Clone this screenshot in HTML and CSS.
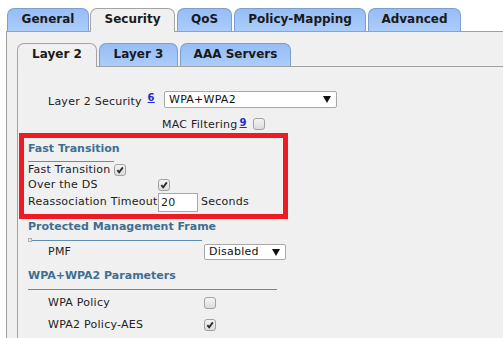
FILE: index.html
```html
<!DOCTYPE html>
<html>
<head>
<meta charset="utf-8">
<link rel="stylesheet" href="styles.css">
</head>
<body>
<div class="page">
  <div class="tabs outer">
    <div class="tab t-general">General</div>
    <div class="tab active t-security">Security</div>
    <div class="tab t-qos">QoS</div>
    <div class="tab t-policy">Policy-Mapping</div>
    <div class="tab t-adv">Advanced</div>
  </div>
  <div class="panel">
    <div class="tabs inner">
      <div class="tab active t-l2">Layer 2</div>
      <div class="tab t-l3">Layer 3</div>
      <div class="tab t-aaa">AAA Servers</div>
    </div>
    <div class="subpanel">
      <div class="row r-l2sec">
        <span class="lbl l2lbl">Layer 2 Security <a class="sup">6</a></span>
        <div class="select sel-l2"><span>WPA+WPA2</span><span class="arrow"></span></div>
      </div>
      <div class="row r-mac">
        <span class="maclbl">MAC Filtering<a class="sup2">9</a></span>
        <span class="cb mac-cb"></span>
      </div>
      <div class="redbox">
        <div class="heading h-ft">Fast Transition</div>
        <div class="hline hl-ft"></div>
        <div class="row r-ft">
          <span>Fast Transition</span>
          <span class="cb checked ft-cb"><svg viewBox="0 0 12 12"><path d="M2.8 6.2 L5 8.8 L9.4 2.8" fill="none" stroke="#2a2a2a" stroke-width="2.2"/></svg></span>
        </div>
        <div class="row r-ds">
          <span class="ds-lbl">Over the DS</span>
          <span class="cb checked"><svg viewBox="0 0 12 12"><path d="M2.8 6.2 L5 8.8 L9.4 2.8" fill="none" stroke="#2a2a2a" stroke-width="2.2"/></svg></span>
        </div>
        <div class="row r-re">
          <span class="re-lbl">Reassociation Timeout</span>
          <span class="input">20</span>
          <span class="secs">Seconds</span>
        </div>
      </div>
      <div class="heading h-pmf">Protected Management Frame</div>
      <div class="hline hl-pmf"><span class="mini"></span></div>
      <div class="row r-pmf">
        <span class="lbl pmf-lbl">PMF</span>
        <div class="select sel-pmf"><span>Disabled</span><span class="arrow"></span></div>
      </div>
      <div class="heading h-wpa">WPA+WPA2 Parameters</div>
      <div class="hline hl-wpa"></div>
      <div class="row r-wpa">
        <span class="lbl pmf-lbl">WPA Policy</span>
        <span class="cb"></span>
      </div>
      <div class="row r-wpa2">
        <span class="lbl pmf-lbl">WPA2 Policy-AES</span>
        <span class="cb checked"><svg viewBox="0 0 12 12"><path d="M2.8 6.2 L5 8.8 L9.4 2.8" fill="none" stroke="#2a2a2a" stroke-width="2.2"/></svg></span>
      </div>
    </div>
  </div>
</div>
</body>
</html>
```
FILE: styles.css
```css
html, body {
  margin: 0;
  padding: 0;
  background: #ffffff;
  width: 503px;
  height: 338px;
  overflow: hidden;
  font-family: Verdana, "DejaVu Sans", sans-serif;
  font-size: 11px;
  color: #222;
}
.page {
  padding-top: 8px;
  padding-left: 6px;
  height: 330px;
  overflow: hidden;
}
.tabs {
  display: flex;
  gap: 2px;
  border-bottom: 1px solid #a0a0a0;
  align-items: flex-end;
}
.tabs.outer {
  height: 23px;
  padding-left: 1px;
}
.tab {
  box-sizing: border-box;
  height: 23px;
  line-height: 21px;
  text-align: center;
  font-weight: bold;
  font-size: 12px;
  color: #1a1a1a;
  background: linear-gradient(#97bdf5, #abcdfb);
  border: 1px solid #7e9fcb;
  border-bottom: none;
  border-radius: 7px 7px 0 0;
}
.tab.active {
  background: #f0f0f0;
  border-color: #a4a4a4;
  height: 24px;
  margin-bottom: -1px;
}
.t-general { width: 82px; }
.t-security { width: 85px; margin-left: -1px; }
.t-qos { width: 55px; }
.t-policy { width: 132px; }
.t-adv { width: 93px; }
.panel {
  background: #f0f0f0;
  border-left: 1px solid #a0a0a0;
  padding-top: 11px;
  padding-left: 10px;
  height: 295px;
}
.tabs.inner {
  height: 23px;
}
.t-l2 { width: 80px; }
.t-l3 { width: 79px; }
.t-aaa { width: 111px; }
.subpanel {
  border-left: 1px solid #a0a0a0;
  height: 247px;
  padding-top: 24px;
  letter-spacing: 0.25px;
}
.row {
  display: flex;
  align-items: center;
  height: 14px;
  line-height: 14px;
  white-space: nowrap;
}
.r-l2sec { height: 17px; }
.lbl { display: inline-block; }
.l2lbl { width: 116px; padding-left: 30px; }
.sup {
  color: #1a2ccc;
  text-decoration: underline;
  font-weight: bold;
  font-size: 10px;
  vertical-align: 4px;
  margin-left: 2px;
}
.sup2 {
  color: #1a2ccc;
  text-decoration: underline;
  font-weight: bold;
  font-size: 10px;
  vertical-align: 2px;
  margin-left: 2px;
}
.select {
  box-sizing: border-box;
  height: 17px;
  background: #fff;
  border: 1px solid #a8a8a8;
  border-radius: 2px;
  display: flex;
  align-items: center;
  justify-content: space-between;
  padding: 0 5px 0 4px;
  color: #111;
}
.sel-l2 { width: 173px; }
.arrow {
  width: 0;
  height: 0;
  border-left: 4px solid transparent;
  border-right: 4px solid transparent;
  border-top: 7px solid #111;
}
.r-mac {
  margin-top: 9px;
}
.maclbl { padding-left: 144px; display: inline-block; }
.mac-cb { margin-left: 6px; }
.cb {
  box-sizing: border-box;
  width: 12px;
  height: 12px;
  border: 1px solid #a2a2a2;
  border-radius: 3px;
  background: linear-gradient(#f4f4f4, #dcdcdc);
  display: inline-flex;
  align-items: center;
  justify-content: center;
}
.cb svg { width: 10px; height: 10px; }
.redbox {
  margin-top: 2px;
  margin-left: 1px;
  width: 269px;
  box-sizing: border-box;
  border: 5px solid #ed1c24;
  padding-left: 4px;
  padding-bottom: 3px;
}
.heading {
  font-weight: bold;
  color: #3e6f93;
  line-height: 14px;
  height: 14px;
  white-space: nowrap;
  letter-spacing: 0;
}
.h-ft { margin-top: 4px; }
.hline {
  height: 1px;
  background: #5e8fb3;
}
.hl-ft { width: 86px; margin-top: 5px; }
.r-ft { margin-top: 1px; }
.ft-cb { margin-left: 3px; }
.ds-lbl { width: 130px; display: inline-block; }
.re-lbl { width: 129px; display: inline-block; }
.r-ds { margin-top: 1px; }
.r-re { margin-top: 1px; height: 18px; }
.input {
  box-sizing: border-box;
  width: 40px;
  height: 19px;
  background: #fff;
  border: 1px solid #a8a8a8;
  line-height: 17px;
  padding-left: 2px;
  margin-left: 1px;
}
.secs { margin-left: 3px; }
.h-pmf { margin-top: 1px; margin-left: 10px; }
.hl-pmf {
  margin-top: 6px;
  margin-left: 10px;
  width: 174px;
  position: relative;
}
.mini {
  position: absolute;
  left: 0;
  top: -2px;
  width: 4px;
  height: 4px;
  box-sizing: border-box;
  border: 1px solid #b0b0b0;
  background: #e8e8e8;
}
.r-pmf { margin-top: 3px; height: 16px; }
.pmf-lbl { width: 156px; padding-left: 30px; }
.sel-pmf { width: 82px; height: 16px; }
.h-wpa { margin-top: 9px; margin-left: 10px; }
.hl-wpa { margin-top: 6px; margin-left: 10px; width: 249px; }
.r-wpa { margin-top: 6px; }
.r-wpa2 { margin-top: 8px; }
```
